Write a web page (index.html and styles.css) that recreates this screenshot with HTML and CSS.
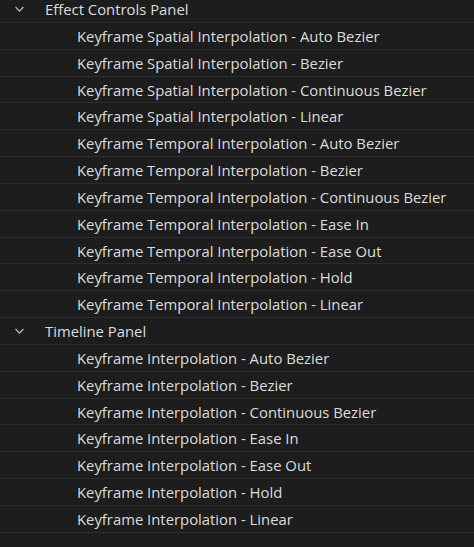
FILE: index.html
```html
<!DOCTYPE html>
<html lang="en">
<head>
    <meta charset="UTF-8">
    <title>Keyboard Shortcuts</title>
    <link rel="stylesheet" href="styles.css">
</head>
<body>
    <div class="command-list">
        <div class="group-row">
            <svg class="chevron" width="11" height="6" viewBox="0 0 11 6"><path d="M1.5 1l4 4 4-4" /></svg>
            <span>Effect Controls Panel</span>
        </div>
        <div class="item-row">Keyframe Spatial Interpolation - Auto Bezier</div>
        <div class="item-row">Keyframe Spatial Interpolation - Bezier</div>
        <div class="item-row">Keyframe Spatial Interpolation - Continuous Bezier</div>
        <div class="item-row">Keyframe Spatial Interpolation - Linear</div>
        <div class="item-row">Keyframe Temporal Interpolation - Auto Bezier</div>
        <div class="item-row">Keyframe Temporal Interpolation - Bezier</div>
        <div class="item-row">Keyframe Temporal Interpolation - Continuous Bezier</div>
        <div class="item-row">Keyframe Temporal Interpolation - Ease In</div>
        <div class="item-row">Keyframe Temporal Interpolation - Ease Out</div>
        <div class="item-row">Keyframe Temporal Interpolation - Hold</div>
        <div class="item-row">Keyframe Temporal Interpolation - Linear</div>

        <div class="group-row">
            <svg class="chevron" width="11" height="6" viewBox="0 0 11 6"><path d="M1.5 1l4 4 4-4" /></svg>
            <span>Timeline Panel</span>
        </div>
        <div class="item-row">Keyframe Interpolation - Auto Bezier</div>
        <div class="item-row">Keyframe Interpolation - Bezier</div>
        <div class="item-row">Keyframe Interpolation - Continuous Bezier</div>
        <div class="item-row">Keyframe Interpolation - Ease In</div>
        <div class="item-row">Keyframe Interpolation - Ease Out</div>
        <div class="item-row">Keyframe Interpolation - Hold</div>
        <div class="item-row">Keyframe Interpolation - Linear</div>
    </div>
</body>
</html>
```

FILE: styles.css
```css
:root {
    --bg-color: #1d1d1d;
    --line-color: #2c2c2c;
    --text-color: #dcdcdc;
}

html, body {
    margin: 0;
    padding: 0;
    background-color: var(--bg-color);
    overflow: hidden;
}

body {
    font-family: "Open Sans", Arial, sans-serif;
    font-size: 14.85px;
    color: var(--text-color);
}

.command-list {
    margin-top: -3.84px;
}

.group-row,
.item-row {
    height: 25.84px;
    border-bottom: 1px solid var(--line-color);
    display: flex;
    align-items: center;
    white-space: nowrap;
}

.group-row {
    padding-left: 14px;
}

.group-row span {
    margin-left: 20px;
}

.chevron {
    fill: none;
    stroke: #b0b0b0;
    stroke-width: 1.3;
}

.item-row {
    padding-left: 77px;
}
```
